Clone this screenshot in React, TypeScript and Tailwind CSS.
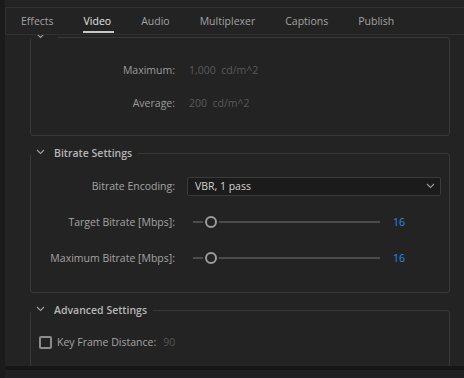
import React from "react";

/* ── Small pieces ─────────────────────────────────────────── */
function Chevron({ className = "" }: { className?: string }) {
  return (
    <svg width="9" height="6" viewBox="0 0 9 6" className={className}>
      <path d="M1 1l3.5 3.5L8 1" fill="none" stroke="currentColor" strokeWidth="1.1" />
    </svg>
  );
}

function Tab({ label, active = false }: { label: string; active?: boolean }) {
  return (
    <div className={`relative flex h-full items-center pt-[1px] ${active ? "text-[#e4e4e4]" : "text-[#a2a2a2]"}`}>
      {label}
      {active && <div className="absolute bottom-[1px] left-[-1px] right-[-3px] h-[2px] bg-[#c9c9c9]" />}
    </div>
  );
}

function Legend({ title, padRight = 6 }: { title?: string; padRight?: number }) {
  return (
    <legend className={`flex h-4 items-center gap-[9px] pl-[5px] ${padRight === 13 ? "pr-[13px]" : "pr-[6px]"}`}>
      <Chevron className="mt-[-2px] text-[#a0a0a0]" />
      {title && <span className="font-semibold text-[#b6b6b6]">{title}</span>}
    </legend>
  );
}

function Slider({ value }: { value: number }) {
  return (
    <div className="flex items-center">
      <div className="relative ml-[6px] flex h-3 w-[187px] items-center">
        <div className="h-[2px] w-full bg-[#4c4c4c]" />
        <div className="absolute left-[12px] top-0 h-3 w-3 rounded-full border-2 border-[#9c9c9c] bg-[#232323] shadow-[0_0_0_2px_#232323]" />
      </div>
      <span className="ml-[13px] text-[#2f8ce6]">{value}</span>
    </div>
  );
}

/* ── Main component ──────────────────────────────────────── */
export default function App() {
  return (
    <div className="flex h-[378px] w-[464px] overflow-hidden bg-[#232323] font-['Open_Sans',sans-serif] text-[10.5px] leading-none">
      {/* Left strip */}
      <div className="w-[5px] shrink-0 bg-[#1b1b1b]" />

      <div className="flex min-w-0 flex-1 flex-col">
        <div className="h-[7px] shrink-0" />

        {/* Tabs */}
        <div className="flex h-[28px] shrink-0 items-stretch gap-[30px] border-y border-l border-[#313131] pl-[15px]">
          <Tab label="Effects" />
          <Tab label="Video" active />
          <Tab label="Audio" />
          <Tab label="Multiplexer" />
          <Tab label="Captions" />
          <Tab label="Publish" />
        </div>

        {/* Scrolled settings */}
        <div className="h-[331px] shrink-0 overflow-hidden">
          <div className="mt-[-6px] ml-[25px] mr-[14px]">
            <fieldset className="rounded-[3px] border border-[#393939] pb-[15px] pt-[9px]">
              <Legend padRight={13} />
              <div className="grid grid-cols-[144px_1fr] gap-x-3">
                <div className="flex h-[33px] items-center justify-end text-[#9c9c9c]">Maximum:</div>
                <div className="flex h-[33px] items-center pl-[2px] text-[#5a5a5a]">1,000&nbsp; cd/m^2</div>
                <div className="flex h-[33px] items-center justify-end text-[#9c9c9c]">Average:</div>
                <div className="flex h-[33px] items-center pl-[2px] text-[#5a5a5a]">200&nbsp; cd/m^2</div>
              </div>
            </fieldset>

            <fieldset className="mt-[9px] rounded-[3px] border border-[#393939] pb-[16px] pt-[7px]">
              <Legend title="Bitrate Settings" />
              <div className="grid grid-cols-[144px_1fr] gap-x-3">
                <div className="flex h-9 items-center justify-end text-[#a4a4a4]">Bitrate Encoding:</div>
                <div className="flex h-9 items-center">
                  <div className="flex h-[19px] w-[254px] items-center justify-between rounded-[2px] border border-[#3b3b3b] bg-[#1b1b1b] pl-[7px] pr-[5px] text-[#d2d2d2]">
                    <span>VBR, 1 pass</span>
                    <Chevron className="text-[#9a9a9a]" />
                  </div>
                </div>
                <div className="flex h-9 items-center justify-end text-[#a4a4a4]">Target Bitrate [Mbps]:</div>
                <div className="flex h-9 items-center">
                  <Slider value={16} />
                </div>
                <div className="flex h-9 items-center justify-end text-[#a4a4a4]">Maximum Bitrate [Mbps]:</div>
                <div className="flex h-9 items-center">
                  <Slider value={16} />
                </div>
              </div>
            </fieldset>

            <fieldset className="mt-[9px] h-[80px] rounded-[3px] border border-[#393939] pt-[12px]">
              <Legend title="Advanced Settings" />
              <div className="flex h-6 items-center pl-[8px]">
                <div className="h-[13px] w-[13px] rounded-[2px] border-2 border-[#8c8c8c]" />
                <span className="ml-[5px] text-[#a4a4a4]">Key Frame Distance:</span>
                <span className="ml-[7px] text-[#555555]">90</span>
              </div>
            </fieldset>
          </div>
        </div>

        {/* Bottom */}
        <div className="h-[4px] shrink-0 bg-[#161616]" />
        <div className="flex-1 bg-[#202020]" />
      </div>
    </div>
  );
}
